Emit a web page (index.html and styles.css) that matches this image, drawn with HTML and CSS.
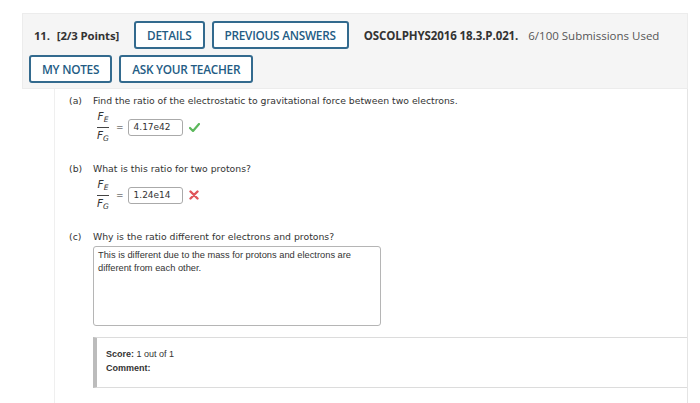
FILE: index.html
```html
<!DOCTYPE html>
<html lang="en">
<head>
<meta charset="utf-8">
<title>Question 11</title>
<link rel="stylesheet" href="styles.css">
</head>
<body>
<div class="page">
  <div class="header">
    <div class="row">
      <div class="qtitle"><span class="qnum">11.</span><span>[2/3 Points]</span></div>
      <button class="btn">DETAILS</button>
      <button class="btn">PREVIOUS ANSWERS</button>
      <span class="qcode">OSCOLPHYS2016 18.3.P.021.</span>
      <span class="subs">6/100 Submissions Used</span>
    </div>
    <div class="row">
      <button class="btn">MY NOTES</button>
      <button class="btn">ASK YOUR TEACHER</button>
    </div>
  </div>
  <div class="body">
    <div class="part part-a">
      <div class="qline"><span class="plabel">(a)</span><span>Find the ratio of the electrostatic to gravitational force between two electrons.</span></div>
      <div class="answer">
        <span class="frac"><span class="num">F<sub>E</sub></span><span class="den">F<sub>G</sub></span></span>
        <span class="eq">=</span>
        <span class="field">4.17e42</span>
        <svg class="mark" width="11" height="9" viewBox="0 0 11 9"><path d="M1 5 L4 8 L10 1" fill="none" stroke="#5cb85c" stroke-width="2.2" stroke-linecap="round" stroke-linejoin="round"/></svg>
      </div>
    </div>
    <div class="part part-b">
      <div class="qline"><span class="plabel">(b)</span><span>What is this ratio for two protons?</span></div>
      <div class="answer">
        <span class="frac"><span class="num">F<sub>E</sub></span><span class="den">F<sub>G</sub></span></span>
        <span class="eq">=</span>
        <span class="field">1.24e14</span>
        <svg class="mark" width="10" height="10" viewBox="0 0 10 10"><path d="M1.5 1.5 L8.5 8.5 M8.5 1.5 L1.5 8.5" fill="none" stroke="#e0555a" stroke-width="2.4" stroke-linecap="round"/></svg>
      </div>
    </div>
    <div class="part part-c">
      <div class="qline"><span class="plabel">(c)</span><span>Why is the ratio different for electrons and protons?</span></div>
      <div class="essay">This is different due to the mass for protons and electrons are different from each other.</div>
    </div>
    <div class="score">
      <div><b>Score:</b> 1 out of 1</div>
      <div><b>Comment:</b></div>
    </div>
  </div>
</div>
</body>
</html>
```
FILE: styles.css
```css
* { box-sizing: border-box; }
html, body { margin: 0; background: #fff; }
body { font-family: "Open Sans", "Liberation Sans", sans-serif; color: #333; }
.page { padding: 13px 12px 0 22px; width: 700px; }
.header {
  width: 666px;
  background: #f5f5f5;
  border: 1px solid #ececec;
  padding: 7px 6px 5px;
}
.row { display: flex; align-items: center; gap: 7px; height: 28px; white-space: nowrap; }
.row > * { flex-shrink: 0; }
.row + .row { margin-top: 6px; }
.qtitle { font-size: 11.4px; font-weight: 700; color: #333; margin-left: 5px; margin-right: 8px; letter-spacing: -0.15px; }
.qnum { margin-right: 7px; }
.btn {
  height: 28px;
  padding: 0 11px;
  background: #fff;
  border: 2px solid #336a8e;
  border-radius: 3px;
  color: #235c84;
  font-family: "Open Sans", sans-serif;
  font-size: 11.8px;
  font-weight: 600;
  letter-spacing: -0.25px;
  white-space: nowrap;
}
.qcode { margin-left: 8px; font-size: 11.5px; font-weight: 700; letter-spacing: -0.1px; color: #333; }
.subs { margin-left: 3px; font-size: 11.5px; color: #555; }
.body {
  margin-left: 32px;
  width: 634px;
  height: 330px;
  border-left: 1px solid #efefef;
  border-right: 1px solid #e4e4e4;
  padding-top: 4px;
  font-family: "DejaVu Sans", Verdana, sans-serif;
  font-size: 9.3px;
  color: #333;
}
.part { padding-left: 14px; white-space: nowrap; }
.qline { display: flex; height: 14px; align-items: center; }
.plabel { width: 24px; }
.answer { display: flex; align-items: center; height: 30px; margin-top: 5px; padding-left: 26px; }
.frac { display: inline-flex; flex-direction: column; align-items: center; font-style: italic; font-size: 10.5px; width: 16px; }
.frac sub { font-size: 7.5px; vertical-align: -2px; }
.num { border-bottom: 1px solid #444; padding: 0 1px 1px; line-height: 12px; }
.den { line-height: 13px; padding-top: 1px; }
.eq { margin: 0 4px 0 5px; font-size: 9px; }
.field {
  display: inline-flex; align-items: center;
  width: 55px; height: 17px;
  border: 1px solid #aaa;
  border-radius: 3px;
  padding-left: 5px;
  font-size: 9px;
}
.mark { margin-left: 6px; }
.part-b { margin-top: 19px; }
.part-c { margin-top: 19px; }
.essay {
  margin: 3px 0 0 24px;
  width: 288px; height: 80px;
  border: 1px solid #b5b5b5;
  border-radius: 3px;
  padding: 2px 4px;
  font-family: "Liberation Sans", Arial, sans-serif;
  font-size: 9.3px;
  line-height: 13px;
  color: #333;
  white-space: normal;
}
.score {
  margin: 11px 0 0 38px;
  height: 51px;
  border-top: 1px solid #dcdcdc;
  border-bottom: 1px solid #dcdcdc;
  border-left: 4px solid #bcbcbc;
  padding: 9px 0 0 9px;
  font-family: "Liberation Sans", Arial, sans-serif;
  font-size: 9px;
  line-height: 14px;
  color: #333;
}
```
